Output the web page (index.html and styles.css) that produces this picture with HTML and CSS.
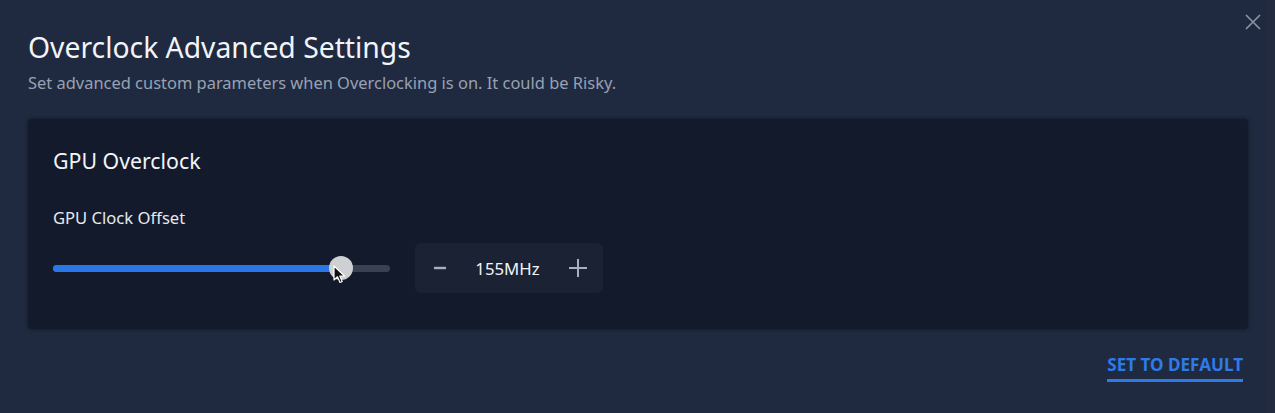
FILE: index.html
```html
<!DOCTYPE html>
<html>

<head>
  <meta charset="UTF-8">
  <meta name="viewport" content="width=device-width, initial-scale=1.0">
  <title>Overclock Advanced Settings</title>
  <link rel="stylesheet" href="styles.css">
</head>

<body>
  <div class="dialog">
    <button class="close-btn" type="button" aria-label="Close">
      <svg width="16" height="16" viewBox="0 0 16 16"><path d="M1 1L15 15M15 1L1 15" stroke="#8c95a8" stroke-width="1.6" fill="none"/></svg>
    </button>
    <h1 class="dialog-title">Overclock Advanced Settings</h1>
    <p class="dialog-desc">Set advanced custom parameters when Overclocking is on. It could be Risky.</p>

    <div class="card">
      <h2 class="card-title">GPU Overclock</h2>
      <div class="field-label">GPU Clock Offset</div>
      <div class="control-row">
        <div class="slider">
          <div class="slider-fill" style="width: 85.5%"></div>
          <div class="slider-thumb" style="left: 85.5%"></div>
          <svg class="cursor" width="14" height="20" viewBox="0 0 14 20"><path d="M1 1L1 15L4.5 11.8L7 17.5L9.2 16.5L6.8 11L11.5 11Z" fill="#111" stroke="#fff" stroke-width="1.2" stroke-linejoin="round"/></svg>
        </div>
        <div class="stepper">
          <button class="step-btn" type="button" aria-label="Decrease">
            <svg width="12" height="18" viewBox="0 0 12 18"><path d="M0 9H12" stroke="#a9afbb" stroke-width="2.4"/></svg>
          </button>
          <span class="step-value">155MHz</span>
          <button class="step-btn" type="button" aria-label="Increase">
            <svg width="18" height="18" viewBox="0 0 18 18"><path d="M0 9H18M9 0V18" stroke="#a9afbb" stroke-width="2"/></svg>
          </button>
        </div>
      </div>
    </div>

    <div class="footer">
      <a class="default-link" href="#">SET TO DEFAULT</a>
    </div>
  </div>
</body>

</html>
```

FILE: styles.css
```css
html,
body {
  margin: 0;
  height: 100%;
  background: #1f2a40;
}

body {
  font-family: "Noto Sans", "Open Sans", sans-serif;
  color: #fff;
}

.dialog {
  position: relative;
  box-sizing: border-box;
  height: 413px;
  padding: 28px 19px 0 28px;
  background: #1f2a40;
  border-right: 8px solid #222b40;
}

.close-btn {
  position: absolute;
  top: 14px;
  right: 6px;
  padding: 0;
  background: none;
  border: none;
  cursor: pointer;
}

.dialog-title {
  margin: 0;
  font-size: 28.3px;
  font-weight: 400;
  line-height: 38px;
  color: #f2f4f8;
}

.dialog-desc {
  margin: 5px 0 0;
  font-size: 16.45px;
  line-height: 24px;
  color: #98a1b3;
}

.card {
  box-sizing: border-box;
  height: 210px;
  margin-top: 24px;
  padding: 28px 25px 0;
  background: #121a2b;
  border-radius: 4px;
  box-shadow: 0 0 4px rgba(0, 0, 0, 0.45);
}

.card-title {
  margin: 0;
  font-size: 21.3px;
  font-weight: 400;
  line-height: 28px;
  color: #f2f4f8;
}

.field-label {
  margin-top: 32px;
  font-size: 16.6px;
  line-height: 22px;
  color: #e6e9ef;
}

.control-row {
  display: flex;
  align-items: center;
  gap: 25px;
  margin-top: 14px;
}

.slider {
  position: relative;
  width: 337px;
  height: 7px;
  background: #3a4152;
  border-radius: 4px;
}

.slider-fill {
  height: 100%;
  background: #2a78e8;
  border-radius: 4px;
}

.slider-thumb {
  position: absolute;
  top: 50%;
  width: 24px;
  height: 24px;
  margin: -12px 0 0 -12px;
  background: #cfd0d3;
  border-radius: 50%;
}

.cursor {
  position: absolute;
  top: 0;
  left: 83%;
}

.stepper {
  display: flex;
  align-items: center;
  justify-content: space-between;
  box-sizing: border-box;
  width: 188px;
  height: 50px;
  padding: 0 16px 0 19px;
  background: #1a2234;
  border-radius: 6px;
}

.step-btn {
  display: flex;
  padding: 0;
  background: none;
  border: none;
  cursor: pointer;
}

.step-value {
  font-size: 16.8px;
  color: #f2f4f8;
}

.footer {
  display: flex;
  justify-content: flex-end;
  margin-top: 24px;
  padding-right: 5px;
}

.default-link {
  padding-bottom: 2px;
  font-size: 17.1px;
  font-weight: 700;
  line-height: 24px;
  color: #2e7be8;
  text-decoration: none;
  border-bottom: 3px solid #2e7be8;
}
```
